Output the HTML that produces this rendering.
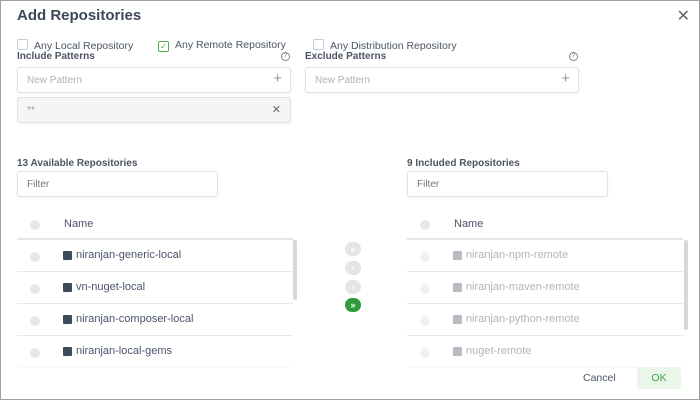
<!DOCTYPE html><html><head><style>
*{box-sizing:border-box;margin:0;padding:0}
body{width:700px;height:400px;overflow:hidden;font-family:"Liberation Sans",sans-serif;background:#fff;position:relative;color:#4a5568}
.frame{position:absolute;left:0;top:0;width:700px;height:400px;border:1px solid #a0a0a0;z-index:5}
.a{position:absolute}
.t{font-size:15px;font-weight:bold;color:#3d4756;left:17px;top:7px}
.cb{width:11px;height:11px;border:1px solid #c6ccd4;border-radius:2px;display:inline-block;vertical-align:-1px;margin-right:6px}
.lbl{font-size:10.5px;color:#4b5563}
.b{font-size:10px;font-weight:bold;color:#4b5563}
.in{border:1px solid #dde2e8;border-radius:3px;height:26px;font-size:10px;color:#aab2bd;padding:7px 9px;box-shadow:0 1px 2px rgba(0,0,0,.05)}
.q{width:9px;height:9px;border:1px solid #888;border-radius:50%;font-size:6px;text-align:center;line-height:7px;color:#666}
.row{position:absolute;height:32px;border-bottom:1px solid #e6e9ed;font-size:11px;color:#4a5568}
.dot{position:absolute;left:13px;top:12px;width:10px;height:10px;border-radius:50%;background:#e5e7ea}
.ic{position:absolute;left:46px;top:11px;width:9px;height:9px;background:#3f4a5a;border-radius:1px}
.nm{position:absolute;left:59px;top:9px}
.dim{color:#b0b5bc}.dim .ic{background:#b8bcc2}.dim .dot{background:#eef0f2}
.mb{position:absolute;left:345px;width:16px;height:14px;border-radius:7px;background:#e3e5e8;color:#fff;font-size:9px;text-align:center;line-height:14px;font-weight:bold}
.sb{position:absolute;width:4px;background:#d4d7db;border-radius:2px}
</style></head><body>
<div class="frame"></div>
<div class="a t">Add Repositories</div>
<div class="a" style="right:10px;top:6px;font-size:16px;color:#666">✕</div>
<div class="a lbl" style="left:17px;top:39px"><span class="cb"></span>Any Local Repository</div>
<div class="a lbl" style="left:158px;top:39px"><span class="cb" style="border-color:#4caf50;color:#4caf50;font-size:8px;line-height:9px;text-align:center">✓</span>Any Remote Repository</div>
<div class="a lbl" style="left:313px;top:39px"><span class="cb"></span>Any Distribution Repository</div>
<div class="a b" style="left:17px;top:51px">Include Patterns</div>
<div class="a b" style="left:305px;top:51px">Exclude Patterns</div>
<div class="a q" style="left:281px;top:52px">?</div>
<div class="a q" style="left:569px;top:52px">?</div>
<div class="a in" style="left:17px;top:67px;width:274px">New Pattern<span style="position:absolute;right:8px;top:2px;font-size:15px;color:#999">+</span></div>
<div class="a in" style="left:305px;top:67px;width:274px">New Pattern<span style="position:absolute;right:8px;top:2px;font-size:15px;color:#999">+</span></div>
<div class="a in" style="left:17px;top:97px;width:274px;background:#f3f5f7;color:#999">**<span style="position:absolute;right:9px;top:5px;font-size:11px;color:#666">✕</span></div>
<div class="a b" style="left:17px;top:158px">13 Available Repositories</div>
<div class="a b" style="left:407px;top:158px">9 Included Repositories</div>
<div class="a in" style="left:17px;top:171px;width:201px;color:#777">Filter</div>
<div class="a in" style="left:407px;top:171px;width:201px;color:#777">Filter</div>
<div class="row" style="left:17px;top:208px;width:276px;border-bottom:2px solid #e3e6ea"><div class="dot"></div><div class="nm" style="left:47px;top:10px">Name</div></div>
<div class="row" style="left:17px;top:240px;width:276px"><div class="dot"></div><div class="ic"></div><div class="nm">niranjan-generic-local</div></div>
<div class="row" style="left:17px;top:272px;width:276px"><div class="dot"></div><div class="ic"></div><div class="nm">vn-nuget-local</div></div>
<div class="row" style="left:17px;top:304px;width:276px"><div class="dot"></div><div class="ic"></div><div class="nm">niranjan-composer-local</div></div>
<div class="row" style="left:17px;top:336px;width:276px"><div class="dot"></div><div class="ic"></div><div class="nm">niranjan-local-gems</div></div>
<div class="row" style="left:17px;top:368px;width:276px"><div class="dot"></div><div class="ic"></div><div class="nm">niranjan-debian-local</div></div>
<div class="sb" style="left:293px;top:240px;height:60px"></div>
<div class="row" style="left:407px;top:208px;width:276px;border-bottom:2px solid #e3e6ea"><div class="dot"></div><div class="nm" style="left:47px;top:10px">Name</div></div>
<div class="row dim" style="left:407px;top:240px;width:276px"><div class="dot"></div><div class="ic"></div><div class="nm">niranjan-npm-remote</div></div>
<div class="row dim" style="left:407px;top:272px;width:276px"><div class="dot"></div><div class="ic"></div><div class="nm">niranjan-maven-remote</div></div>
<div class="row dim" style="left:407px;top:304px;width:276px"><div class="dot"></div><div class="ic"></div><div class="nm">niranjan-python-remote</div></div>
<div class="row dim" style="left:407px;top:336px;width:276px"><div class="dot"></div><div class="ic"></div><div class="nm">nuget-remote</div></div>
<div class="row dim" style="left:407px;top:368px;width:276px"><div class="dot"></div><div class="ic"></div><div class="nm">docker-remote</div></div>
<div class="sb" style="left:684px;top:240px;height:90px"></div>
<div class="mb" style="top:242px">«</div>
<div class="mb" style="top:261px">‹</div>
<div class="mb" style="top:280px">›</div>
<div class="mb" style="top:298px;background:#2e9b3e">»</div>
<div class="a" style="left:0;top:374px;width:700px;height:26px;background:#fff"></div>
<div class="a" style="left:0;top:366px;width:700px;height:8px;background:linear-gradient(rgba(255,255,255,0.6),#fff)"></div>
<div class="a" style="left:583px;top:372px;font-size:10.5px;color:#4a5568">Cancel</div>
<div class="a" style="left:637px;top:367px;width:44px;height:22px;background:#eaf6ea;border-radius:3px;color:#3aa14a;font-size:10.5px;text-align:center;line-height:22px">OK</div>
</body></html>
